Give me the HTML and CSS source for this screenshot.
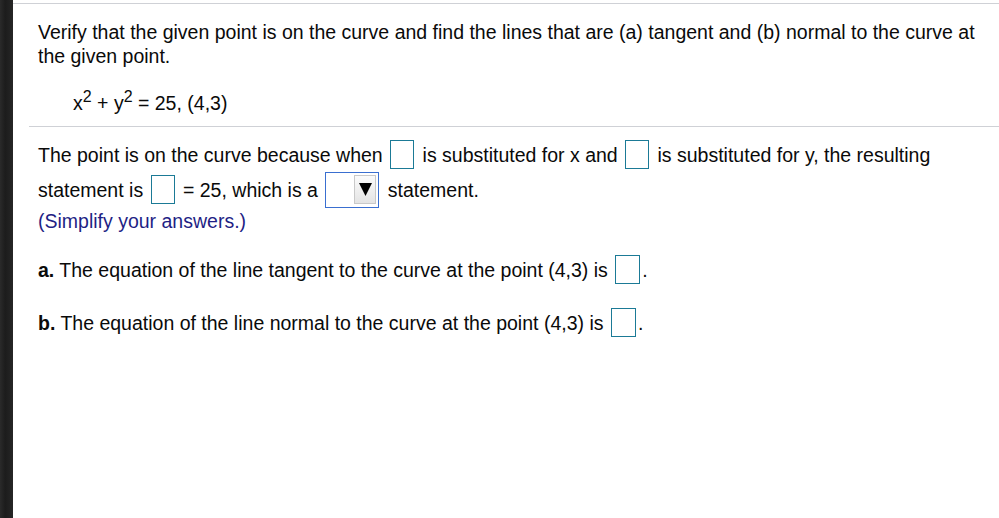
FILE: index.html
```html
<!DOCTYPE html>
<html>
<head>
<meta charset="utf-8">
<link rel="stylesheet" href="styles.css">
</head>
<body>
<div class="page">
  <div class="sidebar"></div>
  <div class="main">
    <div class="question">
      <p class="prompt">Verify that the given point is on the curve and find the lines that are (a) tangent and (b) normal to the curve at the given point.</p>
      <p class="equation">x<sup>2</sup> + y<sup>2</sup> = 25, (4,3)</p>
    </div>
    <div class="answer">
      <p class="stmt">The point is on the curve because when <span class="box"></span> is substituted for x and <span class="box"></span> is substituted for y, the resulting<br>statement is <span class="box"></span> = 25, which is a <span class="select"><span class="btn"><svg width="13" height="15" viewBox="0 0 13 15"><polygon points="0,1 13,1 6.5,14" fill="#000"/></svg></span></span> statement.</p>
      <p class="hint">(Simplify your answers.)</p>
      <p class="part part-a"><b>a.</b> The equation of the line tangent to the curve at the point (4,3) is <span class="box end"></span>.</p>
      <p class="part part-b"><b>b.</b> The equation of the line normal to the curve at the point (4,3) is <span class="box end"></span>.</p>
    </div>
  </div>
</div>
</body>
</html>
```

FILE: styles.css
```css
html, body {
  margin: 0;
  padding: 0;
  background: #fff;
}
.page {
  display: flex;
  width: 999px;
  height: 518px;
  overflow: hidden;
  font-family: "Liberation Sans", Arial, sans-serif;
  font-size: 19.5px;
  color: #0a0a0a;
}
.sidebar {
  width: 13px;
  flex: none;
  background: linear-gradient(to right, #2a2a2a, #1c1c1c 40%, #262626);
}
.main {
  flex: 1;
  padding-top: 3px;
}
.question {
  border-top: 1px solid #cfd1d6;
  padding: 16px 0 0 25px;
}
.prompt {
  margin: 0;
  line-height: 24px;
}
.equation {
  margin: 23px 0 0 35px;
  line-height: 24px;
  padding-bottom: 11px;
}
.equation sup {
  font-size: 16px;
  line-height: 0;
  vertical-align: 8px;
}
.answer {
  margin-left: 16px;
  border-top: 1px solid #cfd1d6;
  padding: 11px 0 0 9px;
}
.stmt {
  margin: 0;
  line-height: 35px;
}
.box {
  display: inline-block;
  width: 22px;
  height: 27px;
  border: 1px solid #1b7a96;
  vertical-align: middle;
  margin: -4px 3px 0 2px;
}
.box.end {
  width: 23px;
  margin-right: 2px;
}
.select {
  display: inline-flex;
  justify-content: flex-end;
  align-items: center;
  box-sizing: border-box;
  width: 54px;
  height: 36px;
  border: 1px solid #3a6fd0;
  vertical-align: middle;
  margin: -4px 3px 0 2px;
  padding-right: 2px;
}
.btn {
  display: flex;
  align-items: center;
  justify-content: center;
  box-sizing: border-box;
  width: 22px;
  height: 29px;
  border: 1px solid #c9c9c9;
  background: linear-gradient(#fbfbfb, #e4e4e4);
}
.btn svg {
  display: block;
}
.hint {
  margin: -2px 0 0;
  line-height: 30px;
  color: #1f1f85;
}
.part {
  margin: 0;
  line-height: 30px;
}
.part-a {
  margin-top: 19px;
}
.part-b {
  margin-top: 23px;
}
```
